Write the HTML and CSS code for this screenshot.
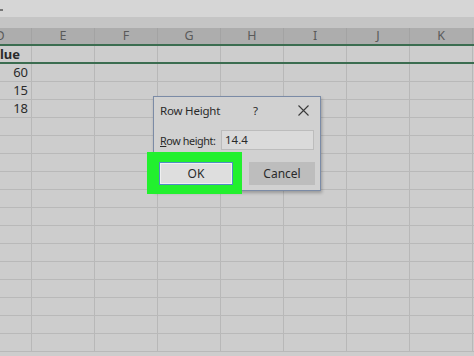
FILE: index.html
```html
<!DOCTYPE html>
<html>
<head>
<meta charset="utf-8">
<link rel="stylesheet" href="styles.css">
</head>
<body>
<div class="app">
  <div class="toolbar"><span class="tick"></span></div>
  <div class="band"></div>
  <div class="sheet">
    <div class="row head"><span class="cell">D</span><span class="cell">E</span><span class="cell">F</span><span class="cell">G</span><span class="cell">H</span><span class="cell">I</span><span class="cell">J</span><span class="cell">K</span><span class="cell">L</span></div>
    <div class="row selected"><span class="cell title">Value</span><span class="cell"></span><span class="cell"></span><span class="cell"></span><span class="cell"></span><span class="cell"></span><span class="cell"></span><span class="cell"></span><span class="cell"></span></div>
    <div class="row"><span class="cell num">60</span><span class="cell"></span><span class="cell"></span><span class="cell"></span><span class="cell"></span><span class="cell"></span><span class="cell"></span><span class="cell"></span><span class="cell"></span></div>
    <div class="row"><span class="cell num">15</span><span class="cell"></span><span class="cell"></span><span class="cell"></span><span class="cell"></span><span class="cell"></span><span class="cell"></span><span class="cell"></span><span class="cell"></span></div>
    <div class="row"><span class="cell num">18</span><span class="cell"></span><span class="cell"></span><span class="cell"></span><span class="cell"></span><span class="cell"></span><span class="cell"></span><span class="cell"></span><span class="cell"></span></div>
    <div class="row"><span class="cell"></span><span class="cell"></span><span class="cell"></span><span class="cell"></span><span class="cell"></span><span class="cell"></span><span class="cell"></span><span class="cell"></span><span class="cell"></span></div>
    <div class="row"><span class="cell"></span><span class="cell"></span><span class="cell"></span><span class="cell"></span><span class="cell"></span><span class="cell"></span><span class="cell"></span><span class="cell"></span><span class="cell"></span></div>
    <div class="row"><span class="cell"></span><span class="cell"></span><span class="cell"></span><span class="cell"></span><span class="cell"></span><span class="cell"></span><span class="cell"></span><span class="cell"></span><span class="cell"></span></div>
    <div class="row"><span class="cell"></span><span class="cell"></span><span class="cell"></span><span class="cell"></span><span class="cell"></span><span class="cell"></span><span class="cell"></span><span class="cell"></span><span class="cell"></span></div>
    <div class="row"><span class="cell"></span><span class="cell"></span><span class="cell"></span><span class="cell"></span><span class="cell"></span><span class="cell"></span><span class="cell"></span><span class="cell"></span><span class="cell"></span></div>
    <div class="row"><span class="cell"></span><span class="cell"></span><span class="cell"></span><span class="cell"></span><span class="cell"></span><span class="cell"></span><span class="cell"></span><span class="cell"></span><span class="cell"></span></div>
    <div class="row"><span class="cell"></span><span class="cell"></span><span class="cell"></span><span class="cell"></span><span class="cell"></span><span class="cell"></span><span class="cell"></span><span class="cell"></span><span class="cell"></span></div>
    <div class="row"><span class="cell"></span><span class="cell"></span><span class="cell"></span><span class="cell"></span><span class="cell"></span><span class="cell"></span><span class="cell"></span><span class="cell"></span><span class="cell"></span></div>
    <div class="row"><span class="cell"></span><span class="cell"></span><span class="cell"></span><span class="cell"></span><span class="cell"></span><span class="cell"></span><span class="cell"></span><span class="cell"></span><span class="cell"></span></div>
    <div class="row"><span class="cell"></span><span class="cell"></span><span class="cell"></span><span class="cell"></span><span class="cell"></span><span class="cell"></span><span class="cell"></span><span class="cell"></span><span class="cell"></span></div>
    <div class="row"><span class="cell"></span><span class="cell"></span><span class="cell"></span><span class="cell"></span><span class="cell"></span><span class="cell"></span><span class="cell"></span><span class="cell"></span><span class="cell"></span></div>
    <div class="row"><span class="cell"></span><span class="cell"></span><span class="cell"></span><span class="cell"></span><span class="cell"></span><span class="cell"></span><span class="cell"></span><span class="cell"></span><span class="cell"></span></div>
    <div class="row"><span class="cell"></span><span class="cell"></span><span class="cell"></span><span class="cell"></span><span class="cell"></span><span class="cell"></span><span class="cell"></span><span class="cell"></span><span class="cell"></span></div>
  </div>

  <div class="dialog">
    <div class="dlg-title">
      <span class="dlg-name">Row Height</span>
      <span class="dlg-help">?</span>
      <svg class="dlg-close" width="11" height="11" viewBox="0 0 11 11"><path d="M0.5 0.5 L10.5 10.5 M10.5 0.5 L0.5 10.5" stroke="#3a3a3a" stroke-width="1.1" fill="none"/></svg>
    </div>
    <div class="dlg-field">
      <label class="dlg-label"><u>R</u>ow height:</label>
      <div class="dlg-input">14.4</div>
    </div>
    <div class="dlg-buttons">
      <div class="highlight"></div>
      <div class="btn ok">OK</div>
      <div class="btn cancel">Cancel</div>
    </div>
  </div>
</div>
</body>
</html>
```

FILE: styles.css
```css
html, body {
  margin: 0;
  padding: 0;
}
body {
  width: 474px;
  height: 356px;
  overflow: hidden;
  background: #cdcdcd;
  font-family: "Noto Sans", "Open Sans", sans-serif;
}
.app {
  position: relative;
  width: 474px;
  height: 356px;
  overflow: hidden;
}
.toolbar {
  height: 17px;
  box-sizing: border-box;
  padding-top: 9px;
  background: #d6d6d6;
}
.tick {
  display: block;
  width: 3px;
  height: 2px;
  background: #777;
}
.band {
  height: 11px;
  background: #c5c5c5;
}
.sheet {
  margin-left: -31px;
  width: 567px;
}
.row {
  display: flex;
  height: 18px;
  box-sizing: border-box;
  border-bottom: 1px solid #b9b9b9;
}
.cell {
  flex: none;
  width: 63px;
  box-sizing: border-box;
  border-right: 1px solid #b8b8b8;
  font-size: 13px;
  line-height: 17px;
  color: #2a2a2a;
  overflow: hidden;
  white-space: nowrap;
}
.row.head {
  height: 16px;
  background: #adadad;
  border-bottom: none;
}
.row.head .cell {
  text-align: center;
  color: #5a5a5a;
  font-size: 12.5px;
  line-height: 16px;
  border-right: 1px solid #a3a3a3;
}
.row.selected {
  height: 20px;
  border-top: 2px solid #3b6d50;
  border-bottom: 2px solid #3b6d50;
}
.row.selected .cell {
  line-height: 16px;
}
.cell.title {
  font-weight: bold;
  padding-left: 15px;
}
.cell.num {
  text-align: right;
  padding-right: 3px;
}

/* dialog */
.dialog {
  position: absolute;
  left: 153px;
  top: 96px;
  width: 168px;
  height: 95px;
  box-sizing: border-box;
  border: 1px solid #7b8ba6;
  background: #d1d1d1;
  box-shadow: 1px 2px 3px rgba(0, 0, 0, 0.25);
  color: #2a2a2a;
}
.dlg-title {
  display: flex;
  align-items: center;
  height: 27px;
  padding-left: 6px;
  font-size: 11.5px;
}
.dlg-name {
  width: 93px;
  letter-spacing: -0.2px;
}
.dlg-help {
  width: 45px;
}
.dlg-close {
  display: block;
}
.dlg-field {
  display: flex;
  align-items: center;
  margin-top: 6px;
  padding-left: 6px;
  height: 20px;
}
.dlg-label {
  width: 61px;
  flex: none;
  white-space: nowrap;
  font-size: 10.8px;
  letter-spacing: -0.4px;
}
.dlg-input {
  width: 93px;
  height: 20px;
  box-sizing: border-box;
  border: 1px solid #bcbcbc;
  background: #dadada;
  font-size: 11.5px;
  line-height: 18px;
  padding-left: 3px;
}
.dlg-buttons {
  position: relative;
  display: flex;
  margin-top: 12px;
  padding-left: 5px;
  gap: 16px;
  height: 23px;
}
.highlight {
  position: absolute;
  left: -7px;
  top: -10px;
  width: 95px;
  height: 42px;
  background: #22f02e;
}
.btn {
  position: relative;
  height: 23px;
  box-sizing: border-box;
  font-size: 12px;
  line-height: 21px;
  text-align: center;
}
.btn.ok {
  width: 74px;
  border: 1px solid #4f8cc4;
  background: #dedede;
  box-shadow: inset 0 0 0 1px #f0f0f0;
}
.btn.cancel {
  width: 66px;
  background: #bdbdbd;
  line-height: 23px;
}
```
